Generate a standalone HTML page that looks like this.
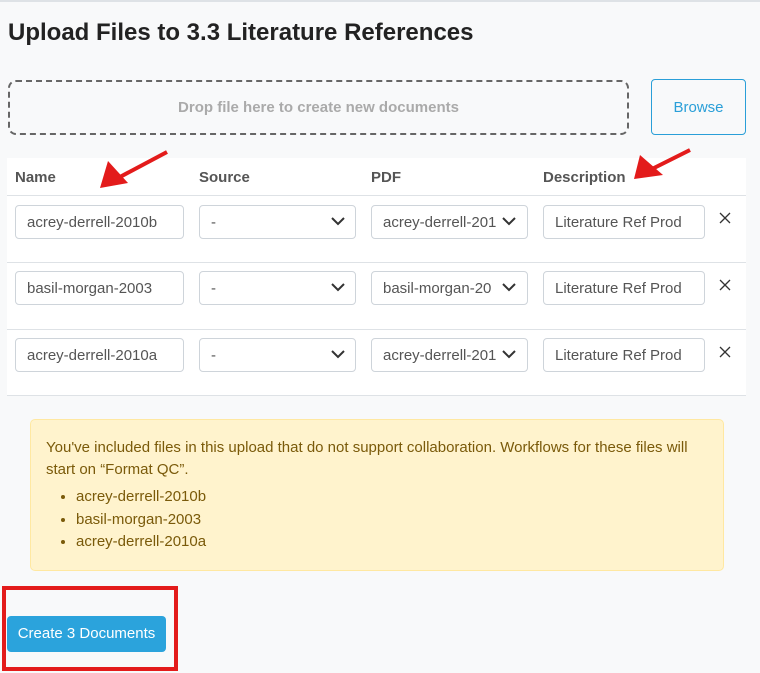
<!DOCTYPE html>
<html><head><style>
body{margin:0;width:760px;height:673px;background:#f8f9fa;font-family:"Liberation Sans",sans-serif;position:relative;overflow:hidden;color:#212529}
.a{position:absolute;box-sizing:border-box}
.inp{position:absolute;box-sizing:border-box;height:34px;border:1px solid #ced4da;border-radius:4px;background:#fff;font-size:15px;color:#555;padding:8px 11px;white-space:nowrap;overflow:hidden}
.th{position:absolute;top:169px;font-size:15px;font-weight:bold;color:#555}
.chev{position:absolute;right:10px;top:10px}
.x{position:absolute;left:719px}
</style></head><body>
<div class="a" style="left:0;top:0;width:760px;height:2px;background:#dee2e6"></div>
<div class="a" style="left:8px;top:19px;font-size:24px;font-weight:bold;color:#222">Upload Files to 3.3 Literature References</div>
<div class="a" style="left:8px;top:80px;width:621px;height:55px;border:2px dashed #666;border-radius:8px;text-align:center;line-height:51px;font-size:15px;font-weight:bold;color:#aaa">Drop file here to create new documents</div>
<div class="a" style="left:651px;top:79px;width:95px;height:56px;border:1px solid #2a9fd8;border-radius:4px;text-align:center;line-height:56px;font-size:15px;color:#2a9fd8">Browse</div>
<div class="a" style="left:7px;top:158px;width:739px;height:237px;background:#fff"></div>
<div class="th" style="left:15px">Name</div>
<div class="th" style="left:199px">Source</div>
<div class="th" style="left:371px">PDF</div>
<div class="th" style="left:543px">Description</div>
<div class="a" style="left:7px;top:195px;width:739px;height:1px;background:#dee2e6"></div>
<div class="a" style="left:7px;top:262px;width:739px;height:1px;background:#dee2e6"></div>
<div class="a" style="left:7px;top:329px;width:739px;height:1px;background:#dee2e6"></div>
<div class="a" style="left:7px;top:395px;width:739px;height:1px;background:#dee2e6"></div>

<div class="inp" style="left:15px;top:205px;width:169px">acrey-derrell-2010b</div>
<div class="inp" style="left:199px;top:205px;width:157px">-<svg class="chev" width="14" height="10"><path d="M1 2l6 6 6-6" fill="none" stroke="#333" stroke-width="2"/></svg></div>
<div class="inp" style="left:371px;top:205px;width:157px">acrey-derrell-201<svg class="chev" style="background:#fff" width="16" height="10"><path d="M2 2l6 6 6-6" fill="none" stroke="#333" stroke-width="2"/></svg></div>
<div class="inp" style="left:543px;top:205px;width:162px">Literature Ref Prod</div>
<svg class="x" style="top:212px" width="12" height="12"><path d="M1 1l10 10M11 1L1 11" stroke="#333" stroke-width="1.3"/></svg>

<div class="inp" style="left:15px;top:271px;width:169px">basil-morgan-2003</div>
<div class="inp" style="left:199px;top:271px;width:157px">-<svg class="chev" width="14" height="10"><path d="M1 2l6 6 6-6" fill="none" stroke="#333" stroke-width="2"/></svg></div>
<div class="inp" style="left:371px;top:271px;width:157px">basil-morgan-20<svg class="chev" style="background:#fff" width="16" height="10"><path d="M2 2l6 6 6-6" fill="none" stroke="#333" stroke-width="2"/></svg></div>
<div class="inp" style="left:543px;top:271px;width:162px">Literature Ref Prod</div>
<svg class="x" style="top:279px" width="12" height="12"><path d="M1 1l10 10M11 1L1 11" stroke="#333" stroke-width="1.3"/></svg>

<div class="inp" style="left:15px;top:338px;width:169px">acrey-derrell-2010a</div>
<div class="inp" style="left:199px;top:338px;width:157px">-<svg class="chev" width="14" height="10"><path d="M1 2l6 6 6-6" fill="none" stroke="#333" stroke-width="2"/></svg></div>
<div class="inp" style="left:371px;top:338px;width:157px">acrey-derrell-201<svg class="chev" style="background:#fff" width="16" height="10"><path d="M2 2l6 6 6-6" fill="none" stroke="#333" stroke-width="2"/></svg></div>
<div class="inp" style="left:543px;top:338px;width:162px">Literature Ref Prod</div>
<svg class="x" style="top:346px" width="12" height="12"><path d="M1 1l10 10M11 1L1 11" stroke="#333" stroke-width="1.3"/></svg>

<svg class="a" style="left:0;top:0" width="760" height="673">
<line x1="167" y1="152" x2="118" y2="178" stroke="#e31b1b" stroke-width="4"/>
<polygon points="100,188 108,161 128,183" fill="#e31b1b"/>
<line x1="690" y1="150" x2="650" y2="170" stroke="#e31b1b" stroke-width="4"/>
<polygon points="634,179 640,155 663,175" fill="#e31b1b"/>
<rect x="4" y="588" width="172" height="81" fill="none" stroke="#e31b1b" stroke-width="4"/>
</svg>

<div class="a" style="left:30px;top:419px;width:694px;height:152px;background:#fff3cd;border:1px solid #ffe8a1;border-radius:5px;padding:17px 15px;font-size:15px;color:#7a5a0a;line-height:22px">You've included files in this upload that do not support collaboration. Workflows for these files will start on “Format QC”.
<ul style="margin:5px 0 0;padding-left:30px;line-height:22.5px"><li>acrey-derrell-2010b</li><li>basil-morgan-2003</li><li>acrey-derrell-2010a</li></ul></div>

<div class="a" style="left:7px;top:616px;width:159px;height:36px;background:#2ba3dc;border-radius:4px;color:#fff;font-size:15px;text-align:center;line-height:36px">Create 3 Documents</div>
</body></html>
